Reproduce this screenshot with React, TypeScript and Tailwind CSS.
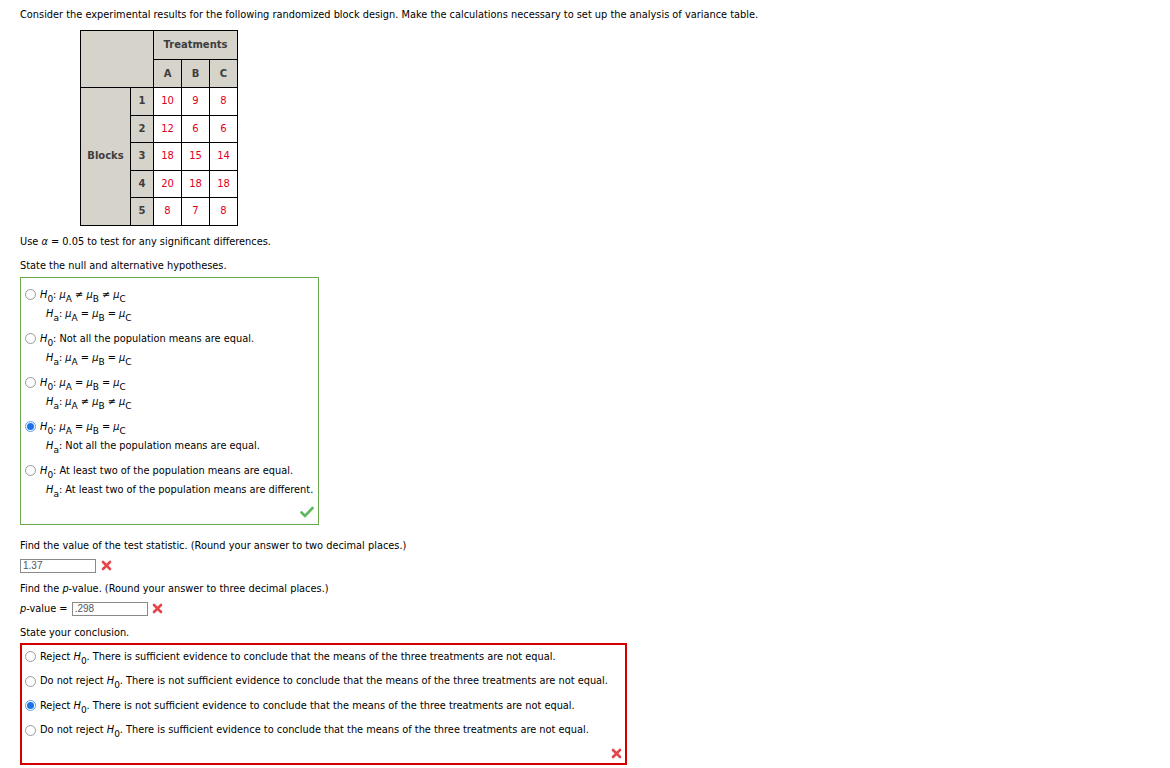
import React from "react";

const font = { fontFamily: "'DejaVu Sans', Verdana, sans-serif" };

function Sub({ children }: { children: React.ReactNode }) {
  return <span className="relative top-[4px] text-[9px] not-italic">{children}</span>;
}

function H0() {
  return (
    <span>
      <i>H</i>
      <Sub>0</Sub>
    </span>
  );
}

function Ha() {
  return (
    <span>
      <i>H</i>
      <Sub>a</Sub>
    </span>
  );
}

function Mu({ s }: { s: string }) {
  return (
    <span>
      <i>μ</i>
      <Sub>{s}</Sub>
    </span>
  );
}

function Means({ op }: { op: string }) {
  return (
    <span>
      <Mu s="A" /> {op} <Mu s="B" /> {op} <Mu s="C" />
    </span>
  );
}

function Radio({ checked }: { checked?: boolean }) {
  return (
    <span
      className={
        "inline-flex shrink-0 items-center justify-center w-[11px] h-[11px] rounded-full border " +
        (checked ? "border-[#5a9cf0] bg-white" : "border-[#9a9a9a] bg-white")
      }
    >
      {checked && <span className="w-[7px] h-[7px] rounded-full bg-[#1a73e8]" />}
    </span>
  );
}

function RedX() {
  return (
    <svg width="11" height="11" viewBox="0 0 11 11">
      <path d="M2 2 L9 9 M9 2 L2 9" stroke="#e5454b" strokeWidth="2.6" strokeLinecap="round" />
    </svg>
  );
}

function Check() {
  return (
    <svg width="14" height="12" viewBox="0 0 14 12">
      <path d="M1.5 6.5 L5 10 L12.5 2" fill="none" stroke="#5cb85c" strokeWidth="2.6" strokeLinecap="round" />
    </svg>
  );
}

function Hyp({ checked, l1, l2 }: { checked?: boolean; l1: React.ReactNode; l2: React.ReactNode }) {
  return (
    <div className="flex items-start whitespace-nowrap">
      <div className="h-[19px] flex items-center pl-[4px] pr-[4px]">
        <Radio checked={checked} />
      </div>
      <div>
        <div className="h-[19px] leading-[19px]">{l1}</div>
        <div className="h-[19px] leading-[19px] pl-[6px]">{l2}</div>
      </div>
    </div>
  );
}

function Concl({ checked, children }: { checked?: boolean; children: React.ReactNode }) {
  return (
    <div className="flex items-center h-[24.5px] whitespace-nowrap">
      <div className="pl-[3px] pr-[4px] flex items-center">
        <Radio checked={checked} />
      </div>
      <div>{children}</div>
    </div>
  );
}

const rows = [
  [1, 10, 9, 8],
  [2, 12, 6, 6],
  [3, 18, 15, 14],
  [4, 20, 18, 18],
  [5, 8, 7, 8],
];

export default function App() {
  const gray = "bg-[#d6d3ca] border border-black text-[#3d3d3d] font-bold text-center";
  const num = "bg-white border border-black text-[#e0001b] text-center";
  return (
    <div className="min-h-screen bg-white text-black text-[9.8px] leading-[14px] px-5 pt-[8px]" style={font}>
      <p>
        Consider the experimental results for the following randomized block design. Make the calculations necessary to set
        up the analysis of variance table.
      </p>

      <table className="mt-[8px] ml-[60px] border-collapse border border-black text-[10px]">
        <tbody>
          <tr className="h-[29px]">
            <td rowSpan={2} colSpan={2} className={gray + " w-[73px]"} />
            <td colSpan={3} className={gray}>
              Treatments
            </td>
          </tr>
          <tr className="h-[28px]">
            <td className={gray + " w-[28px]"}>A</td>
            <td className={gray + " w-[28px]"}>B</td>
            <td className={gray + " w-[28px]"}>C</td>
          </tr>
          {rows.map((r, i) => (
            <tr key={i} className="h-[27.5px]">
              {i === 0 && (
                <td rowSpan={5} className={gray + " w-[50px]"}>
                  Blocks
                </td>
              )}
              <td className={gray + " w-[23px]"}>{r[0]}</td>
              <td className={num}>{r[1]}</td>
              <td className={num}>{r[2]}</td>
              <td className={num}>{r[3]}</td>
            </tr>
          ))}
        </tbody>
      </table>

      <p className="mt-[9px]">
        Use <i>α</i> = 0.05 to test for any significant differences.
      </p>
      <p className="mt-[10px]">State the null and alternative hypotheses.</p>

      <div className="mt-[4px] w-[299px] border border-[#6aa84f] pt-[7px] pb-[6px] flex flex-col gap-[6px]">
        <Hyp
          l1={
            <>
              <H0 />: <Means op="≠" />
            </>
          }
          l2={
            <>
              <Ha />: <Means op="=" />
            </>
          }
        />
        <Hyp
          l1={
            <>
              <H0 />: Not all the population means are equal.
            </>
          }
          l2={
            <>
              <Ha />: <Means op="=" />
            </>
          }
        />
        <Hyp
          l1={
            <>
              <H0 />: <Means op="=" />
            </>
          }
          l2={
            <>
              <Ha />: <Means op="≠" />
            </>
          }
        />
        <Hyp
          checked
          l1={
            <>
              <H0 />: <Means op="=" />
            </>
          }
          l2={
            <>
              <Ha />: Not all the population means are equal.
            </>
          }
        />
        <Hyp
          l1={
            <>
              <H0 />: At least two of the population means are equal.
            </>
          }
          l2={
            <>
              <Ha />: At least two of the population means are different.
            </>
          }
        />
        <div className="flex justify-end pr-[4px] mt-[1px]">
          <Check />
        </div>
      </div>

      <p className="mt-[14px]">Find the value of the test statistic. (Round your answer to two decimal places.)</p>
      <div className="mt-[6px] flex items-center gap-[5px]">
        <div
          className="w-[76px] h-[14px] border border-[#8a8a8a] text-[10px] leading-[12px] text-[#555] pl-[2px]"
          style={{ fontFamily: "'Liberation Sans', Arial, sans-serif" }}
        >
          1.37
        </div>
        <RedX />
      </div>

      <p className="mt-[9px]">
        Find the <i>p</i>-value. (Round your answer to three decimal places.)
      </p>
      <div className="mt-[6px] flex items-center">
        <span>
          <i>p</i>-value =&nbsp;
        </span>
        <div
          className="ml-[1px] w-[76px] h-[14px] border border-[#8a8a8a] text-[10px] leading-[12px] text-[#555] pl-[2px]"
          style={{ fontFamily: "'Liberation Sans', Arial, sans-serif" }}
        >
          .298
        </div>
        <span className="ml-[4px]">
          <RedX />
        </span>
      </div>

      <p className="mt-[10px]">State your conclusion.</p>
      <div className="mt-[3px] w-[607px] h-[122px] border-2 border-[#d40000] flex flex-col">
        <Concl>
          Reject <H0 />. There is sufficient evidence to conclude that the means of the three treatments are not equal.
        </Concl>
        <Concl>
          Do not reject <H0 />. There is not sufficient evidence to conclude that the means of the three treatments are not
          equal.
        </Concl>
        <Concl checked>
          Reject <H0 />. There is not sufficient evidence to conclude that the means of the three treatments are not equal.
        </Concl>
        <Concl>
          Do not reject <H0 />. There is sufficient evidence to conclude that the means of the three treatments are not
          equal.
        </Concl>
        <div className="flex-1 flex items-end justify-end pr-[3px] pb-[4px]">
          <RedX />
        </div>
      </div>
    </div>
  );
}
